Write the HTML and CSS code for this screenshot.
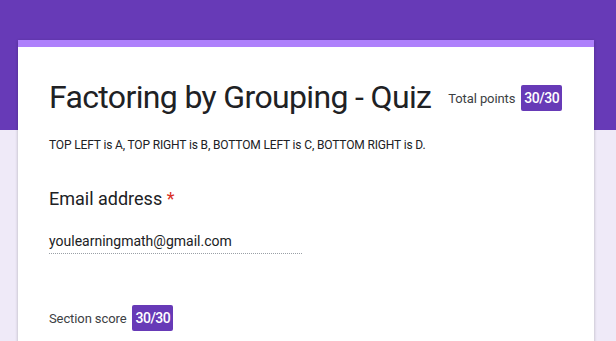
FILE: index.html
```html
<!DOCTYPE html>
<html lang="en">
<head>
    <meta charset="UTF-8">
    <meta name="viewport" content="width=device-width, initial-scale=1.0">
    <title>Factoring by Grouping - Quiz</title>
    <link rel="stylesheet" href="styles.css">
</head>
<body>

    <div class="header-band"></div>

    <div class="container">
        <div class="card">
            <div class="card-top"></div>

            <!-- Title and total score -->
            <div class="title-row">
                <h1>Factoring by Grouping - Quiz</h1>
                <div class="score">
                    <span>Total points</span>
                    <span class="badge">30/30</span>
                </div>
            </div>
            <p class="description">TOP LEFT is A, TOP RIGHT is B, BOTTOM LEFT is C, BOTTOM RIGHT is D.</p>

            <!-- Email question -->
            <div class="question">
                <h2>Email address <span class="required">*</span></h2>
                <div class="answer">youlearningmath@gmail.com</div>
            </div>

            <!-- Section score -->
            <div class="score section-score">
                <span>Section score</span>
                <span class="badge">30/30</span>
            </div>
        </div>
    </div>

</body>
</html>
```

FILE: styles.css
```css
body {
    font-family: Roboto, "Liberation Sans", Arial, sans-serif;
    margin: 0;
    padding: 0;
    background-color: #efeaf8;
    color: #202124;
    white-space: nowrap;
}
.header-band {
    background-color: #673ab7;
    height: 130px;
    margin-bottom: -90px;
}

.container {
    padding: 0 22px 0 18px;
}
.card {
    background: #fff;
    height: 310px;
    box-shadow: 0 1px 3px rgba(0, 0, 0, 0.25);
    padding: 0 31px;
    overflow: hidden;
}
.card-top {
    background-color: #ae80fb;
    height: 7px;
    margin: 0 -31px;
}
.title-row {
    display: flex;
    align-items: center;
    padding-top: 30px;
}
.title-row h1 {
    font-size: 32px;
    font-weight: 400;
    margin: 0;
    line-height: 40px;
    letter-spacing: -0.65px;
}
.score {
    display: flex;
    align-items: center;
    gap: 6px;
    font-size: 13px;
    color: #3c4043;
    letter-spacing: -0.1px;
}
.title-row .score {
    margin-left: 17px;
    margin-top: 2px;
}
.badge {
    background-color: #673ab7;
    color: #fff;
    font-size: 14px;
    font-weight: 500;
    padding: 4px 3px;
    border-radius: 2px;
    line-height: 18px;
    letter-spacing: -0.5px;
}
.description {
    font-size: 12px;
    margin: 20px 0 0;
    line-height: 16px;
    letter-spacing: -0.15px;
}
.question {
    margin-top: 34px;
}
.question h2 {
    font-size: 18px;
    font-weight: 400;
    margin: 0;
    line-height: 24px;
}
.required {
    color: #d93025;
}
.answer {
    margin-top: 20px;
    width: 253px;
    font-size: 14px;
    line-height: 20px;
    border-bottom: 1px dotted #9aa0a6;
    padding-bottom: 2px;
}
.section-score {
    margin-top: 51px;
}
```
